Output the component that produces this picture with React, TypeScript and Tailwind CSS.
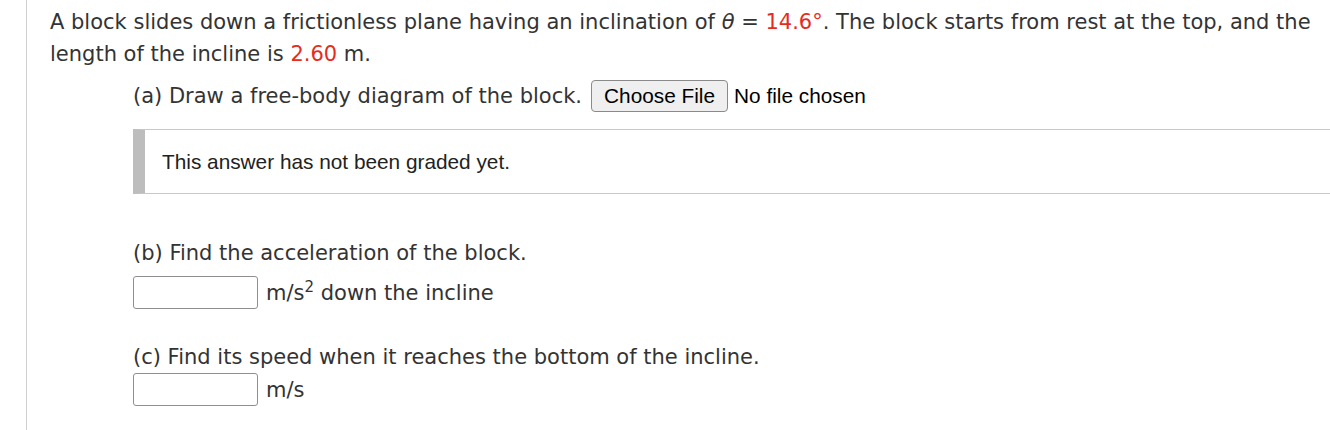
const verdana = "font-['DejaVu_Sans','Verdana',sans-serif]";
const arial = "font-['Liberation_Sans','Arial',sans-serif]";

function Red({ children }: { children: React.ReactNode }) {
  return <span className="text-[#e62b1e]">{children}</span>;
}

function AnswerInput() {
  return (
    <input
      type="text"
      className="h-[33px] w-[125px] rounded-[3px] border border-[#8f8f8f] bg-white px-1 outline-none"
    />
  );
}

export default function App() {
  return (
    <div className="min-h-[430px] w-[1330px] overflow-hidden bg-white">
      <div
        className={`ml-[26px] min-h-[430px] border-l border-[#cfcfcf] pl-[23px] pt-[6px] pr-[14px] text-[21px] leading-[32px] text-[#333333] ${verdana}`}
      >
        <p>
          A block slides down a frictionless plane having an inclination of{" "}
          <i>θ</i> = <Red>14.6°</Red>. The block starts from rest at the top,
          and the length of the incline is <Red>2.60</Red> m.
        </p>

        <div className="ml-[83px] -mr-[14px]">
          <div className="mt-[10px] flex items-center">
            <span>(a) Draw a free-body diagram of the block.</span>
            <button
              type="button"
              className={`ml-[9px] h-[32px] rounded-[4px] border border-[#8a8a8a] bg-[#efefef] px-[12px] text-[20.8px] leading-none text-black ${arial}`}
            >
              Choose File
            </button>
            <span className={`ml-[6px] text-[20.8px] text-black ${arial}`}>
              No file chosen
            </span>
          </div>

          <div className="mt-[17px] flex h-[65px] items-center border-y border-l-[12px] border-y-[#c8c8c8] border-l-[#bdbdbd] pl-[17px]">
            <span className={`text-[20.8px] text-[#222222] ${arial}`}>
              This answer has not been graded yet.
            </span>
          </div>

          <div className="mt-[43px]">(b) Find the acceleration of the block.</div>
          <div className="mt-[7px] flex items-center gap-[8px]">
            <AnswerInput />
            <span>
              m/s<sup className="text-[15px] leading-none">2</sup> down the
              incline
            </span>
          </div>

          <div className="mt-[32px]">
            (c) Find its speed when it reaches the bottom of the incline.
          </div>
          <div className="flex items-center gap-[8px]">
            <AnswerInput />
            <span>m/s</span>
          </div>
        </div>
      </div>
    </div>
  );
}
